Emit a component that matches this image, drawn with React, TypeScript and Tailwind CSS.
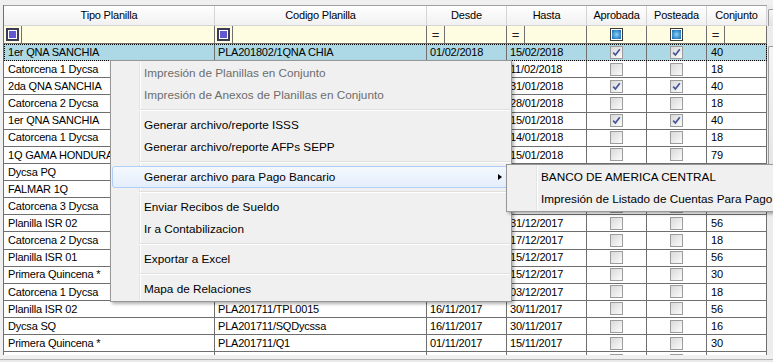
import React from "react";

type Row = {
  tipo: string;
  codigo: string;
  desde: string;
  hasta: string;
  aprobada: boolean;
  posteada: boolean;
  conjunto: string;
};

const rows: Row[] = [
  { tipo: "1er QNA SANCHIA", codigo: "PLA201802/1QNA CHIA", desde: "01/02/2018", hasta: "15/02/2018", aprobada: true, posteada: true, conjunto: "40" },
  { tipo: "Catorcena 1 Dycsa", codigo: "PLA201801/CAT1Dycsa", desde: "29/01/2018", hasta: "11/02/2018", aprobada: false, posteada: false, conjunto: "18" },
  { tipo: "2da QNA SANCHIA", codigo: "PLA201801/2QNA CHIA", desde: "16/01/2018", hasta: "31/01/2018", aprobada: true, posteada: true, conjunto: "40" },
  { tipo: "Catorcena 2 Dycsa", codigo: "PLA201801/CAT2Dycsa", desde: "15/01/2018", hasta: "28/01/2018", aprobada: false, posteada: false, conjunto: "18" },
  { tipo: "1er QNA SANCHIA", codigo: "PLA201801/1QNA CHIA", desde: "01/01/2018", hasta: "15/01/2018", aprobada: true, posteada: true, conjunto: "40" },
  { tipo: "Catorcena 1 Dycsa", codigo: "PLA201801/CAT1Dycsa", desde: "01/01/2018", hasta: "14/01/2018", aprobada: false, posteada: false, conjunto: "18" },
  { tipo: "1Q GAMA HONDURAS", codigo: "PLA201801/1QGAMA", desde: "01/01/2018", hasta: "15/01/2018", aprobada: false, posteada: false, conjunto: "79" },
  { tipo: "Dycsa PQ", codigo: "PLA201801/PQDycsa", desde: "01/01/2018", hasta: "15/01/2018", aprobada: false, posteada: false, conjunto: "16" },
  { tipo: "FALMAR 1Q", codigo: "PLA201801/FALMAR1Q", desde: "01/01/2018", hasta: "15/01/2018", aprobada: false, posteada: false, conjunto: "30" },
  { tipo: "Catorcena 3 Dycsa", codigo: "PLA201712/CAT3Dycsa", desde: "18/12/2017", hasta: "31/12/2017", aprobada: false, posteada: false, conjunto: "18" },
  { tipo: "Planilla ISR 02", codigo: "PLA201712/TPL0016", desde: "16/12/2017", hasta: "31/12/2017", aprobada: false, posteada: false, conjunto: "56" },
  { tipo: "Catorcena 2 Dycsa", codigo: "PLA201712/CAT2Dycsa", desde: "04/12/2017", hasta: "17/12/2017", aprobada: false, posteada: false, conjunto: "18" },
  { tipo: "Planilla ISR 01", codigo: "PLA201712/TPL0015", desde: "01/12/2017", hasta: "15/12/2017", aprobada: false, posteada: false, conjunto: "56" },
  { tipo: "Primera Quincena *", codigo: "PLA201712/Q1", desde: "01/12/2017", hasta: "15/12/2017", aprobada: false, posteada: false, conjunto: "30" },
  { tipo: "Catorcena 1 Dycsa", codigo: "PLA201711/CAT1Dycsa", desde: "20/11/2017", hasta: "03/12/2017", aprobada: false, posteada: false, conjunto: "18" },
  { tipo: "Planilla ISR 02", codigo: "PLA201711/TPL0015", desde: "16/11/2017", hasta: "30/11/2017", aprobada: false, posteada: false, conjunto: "56" },
  { tipo: "Dycsa SQ", codigo: "PLA201711/SQDycssa", desde: "16/11/2017", hasta: "30/11/2017", aprobada: false, posteada: false, conjunto: "16" },
  { tipo: "Primera Quincena *", codigo: "PLA201711/Q1", desde: "01/11/2017", hasta: "15/11/2017", aprobada: false, posteada: false, conjunto: "30" },
  // only the top edge of this row shows under the scroll strip
  { tipo: "", codigo: "", desde: "", hasta: "", aprobada: false, posteada: false, conjunto: "" },
];

const cols = ["w-[211px]", "w-[212px]", "w-[80px]", "w-[80px]", "w-[60px]", "w-[60px]", "w-[60px]"];
const headers = ["Tipo Planilla", "Codigo Planilla", "Desde", "Hasta", "Aprobada", "Posteada", "Conjunto"];

type MenuEntry = { label: string; disabled?: boolean; active?: boolean; submenu?: boolean } | "sep";

const menu: MenuEntry[] = [
  { label: "Impresión de Planillas en Conjunto", disabled: true },
  { label: "Impresión de Anexos de Planillas en Conjunto", disabled: true },
  "sep",
  { label: "Generar archivo/reporte ISSS" },
  { label: "Generar archivo/reporte AFPs SEPP" },
  "sep",
  { label: "Generar archivo para Pago Bancario", active: true, submenu: true },
  "sep",
  { label: "Enviar Recibos de Sueldo" },
  { label: "Ir a Contabilizacion" },
  "sep",
  { label: "Exportar a Excel" },
  "sep",
  { label: "Mapa de Relaciones" },
];

const subMenu = ["BANCO DE AMERICA CENTRAL", "Impresión de Listado de Cuentas Para Pago Bancario"];

function Check({ checked }: { checked: boolean }) {
  return (
    <div className="flex h-[13px] w-[13px] items-center justify-center border border-[#9c9c9c] bg-gradient-to-br from-[#d9d9d9] to-[#fbfbfb]">
      {checked && (
        <svg width="9" height="9" viewBox="0 0 9 9">
          <path d="M1.2 4.6 L3.4 7 L7.8 1.2" stroke="#44559a" strokeWidth="1.7" fill="none" />
        </svg>
      )}
    </div>
  );
}

function BlueBox() {
  return (
    <div className="h-[13px] w-[13px] border border-[#3a3a3a] bg-white p-[1px]">
      <div className="h-full w-full bg-[radial-gradient(circle,#8fd0f5_0%,#2f86c8_70%,#1c64a3_100%)]" />
    </div>
  );
}

function FilterIcon() {
  return (
    <div className="h-[13px] w-[13px] border-2 border-[#3b3b55] bg-white p-[1px]">
      <div className="h-full w-full bg-[#6258d0]" />
    </div>
  );
}

function OpCell({ children }: { children: React.ReactNode }) {
  return (
    <div className="flex h-full w-[18px] shrink-0 items-center justify-center border-r border-[#6f6f6f]">
      {children}
    </div>
  );
}

function Equals() {
  return <span className="text-[13px] leading-none text-[#202020]">=</span>;
}

export default function App() {
  return (
    <div className="relative h-[362px] w-[773px] overflow-hidden bg-[#f0f0f0] font-['Liberation_Sans',Arial,sans-serif] text-black">
      <div className="h-[5px]" />
      <div className="flex h-[350px]">
        <div className="w-[3px] shrink-0" />
        <div className="w-[1px] shrink-0 bg-[#6f6f6f]" />
        {/* grid */}
        <div className="flex w-[763px] shrink-0 flex-col overflow-hidden border-t border-[#a0a0a0] bg-white text-[11px] tracking-[-0.2px]">
          {/* header */}
          <div className="flex h-[20px] shrink-0 border-b border-[#d5d5d5] bg-gradient-to-b from-white to-[#f1f1f1]">
            {headers.map((h, i) => (
              <div key={h} className={`${cols[i]} flex items-center justify-center border-r border-[#d5d5d5]`}>
                {h}
              </div>
            ))}
          </div>
          {/* filter row */}
          <div className="flex h-[18px] shrink-0 border-b border-[#6f6f6f] bg-[#fffde1]">
            <div className={`${cols[0]} flex border-r border-[#6f6f6f]`}>
              <OpCell><FilterIcon /></OpCell>
            </div>
            <div className={`${cols[1]} flex border-r border-[#6f6f6f]`}>
              <OpCell><FilterIcon /></OpCell>
            </div>
            <div className={`${cols[2]} flex border-r border-[#6f6f6f]`}>
              <OpCell><Equals /></OpCell>
            </div>
            <div className={`${cols[3]} flex border-r border-[#6f6f6f]`}>
              <OpCell><Equals /></OpCell>
            </div>
            <div className={`${cols[4]} flex items-center justify-center border-r border-[#6f6f6f]`}>
              <BlueBox />
            </div>
            <div className={`${cols[5]} flex items-center justify-center border-r border-[#6f6f6f]`}>
              <BlueBox />
            </div>
            <div className={`${cols[6]} flex border-r border-[#6f6f6f]`}>
              <OpCell><Equals /></OpCell>
            </div>
          </div>
          {/* rows */}
          {rows.map((r, idx) => {
            const selected = idx === 0;
            return (
              <div
                key={idx}
                className={`relative flex h-[17.14px] shrink-0 ${selected ? "bg-[#add8e6]" : "border-b border-[#6f6f6f] bg-white"}`}
              >
                <div className={`${cols[0]} flex items-center overflow-hidden whitespace-nowrap border-r border-[#6f6f6f] pl-[4px]`}>{r.tipo}</div>
                <div className={`${cols[1]} flex items-center overflow-hidden whitespace-nowrap border-r border-[#6f6f6f] pl-[3px]`}>{r.codigo}</div>
                <div className={`${cols[2]} flex items-center overflow-hidden whitespace-nowrap border-r border-[#6f6f6f] pl-[3px]`}>{r.desde}</div>
                <div className={`${cols[3]} flex items-center overflow-hidden whitespace-nowrap border-r border-[#6f6f6f] pl-[3px]`}>{r.hasta}</div>
                <div className={`${cols[4]} flex items-center justify-center border-r border-[#6f6f6f]`}><Check checked={r.aprobada} /></div>
                <div className={`${cols[5]} flex items-center justify-center border-r border-[#6f6f6f]`}><Check checked={r.posteada} /></div>
                <div className={`${cols[6]} flex items-center overflow-hidden whitespace-nowrap border-r border-[#6f6f6f] pl-[4px]`}>{r.conjunto}</div>
                {selected && <div className="pointer-events-none absolute inset-0 border border-dotted border-black" />}
              </div>
            );
          })}
        </div>
        {/* vertical scrollbar */}
        <div className="flex w-[6px] shrink-0 flex-col bg-[#ececec] pl-[1px]">
          <div className="mt-[4px] h-[17px] rounded-tl-[2px] border-l border-t border-[#9a9a9a] bg-gradient-to-b from-[#f6f6f6] to-[#e2e2e2]" />
          <div className="mt-[20px] h-[120px] rounded-tl-[2px] border-l border-t border-[#9a9a9a] bg-gradient-to-b from-[#f4f4f4] to-[#e6e6e6]" />
        </div>
      </div>
      {/* bottom strip */}
      <div className="h-[4px] bg-[#f0f0f0]" />
      <div className="h-[3px] border-t border-[#b4b4b4] bg-[#e9e9e9]" />

      {/* context menu */}
      <div className="absolute left-[110px] top-[60px] w-[402px] border border-[#979797] bg-[#f0f0f0] p-[1px] text-[11.75px] shadow-[2px_2px_3px_rgba(0,0,0,0.3)]">
        <div className="relative">
          <div className="absolute bottom-0 left-[27px] top-0 w-[1px] bg-[#e2e3e3]" />
          <div className="absolute bottom-0 left-[28px] top-0 w-[1px] bg-white" />
          {menu.map((m, i) =>
            m === "sep" ? (
              <div key={i} className="relative flex h-[8px] flex-col justify-center pl-[27px]">
                <div className="h-[1px] bg-[#e0e0e0]" />
                <div className="h-[1px] bg-white" />
              </div>
            ) : (
              <div
                key={i}
                className={`relative flex h-[22px] items-center rounded-[3px] border pl-[31px] ${
                  m.active
                    ? "border-[#aecff7] bg-gradient-to-b from-[#f4f8fe] to-[#e4eefb]"
                    : "border-transparent"
                } ${m.disabled ? "text-[#6d6d6d]" : "text-black"}`}
              >
                <span className="whitespace-nowrap">{m.label}</span>
                {m.submenu && (
                  <span className="absolute right-[7px] top-[7px] h-0 w-0 border-y-[3.5px] border-l-[4px] border-y-transparent border-l-black" />
                )}
              </div>
            )
          )}
        </div>
      </div>

      {/* submenu */}
      <div className="absolute left-[506px] top-[164px] w-[320px] border border-[#979797] bg-[#f0f0f0] p-[1px] text-[11.75px] shadow-[2px_2px_3px_rgba(0,0,0,0.3)]">
        <div className="relative">
          <div className="absolute bottom-0 left-[28px] top-0 w-[1px] bg-[#e2e3e3]" />
          <div className="absolute bottom-0 left-[29px] top-0 w-[1px] bg-white" />
          {subMenu.map((s) => (
            <div key={s} className="relative flex h-[22px] items-center border border-transparent pl-[32px]">
              <span className="whitespace-nowrap">{s}</span>
            </div>
          ))}
        </div>
      </div>
    </div>
  );
}
